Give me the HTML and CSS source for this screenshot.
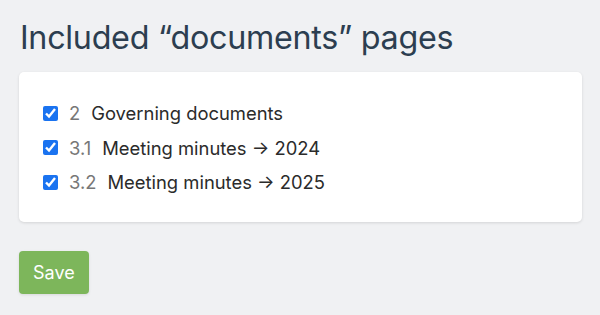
FILE: index.html
```html
<!DOCTYPE html>
<html lang="en">
<head>
    <meta charset="UTF-8">
    <meta name="viewport" content="width=device-width, initial-scale=1.0">
    <title>Included documents pages</title>
    <link rel="stylesheet" href="styles.css">
</head>
<body>
    <h1>Included “documents” pages</h1>
    <div class="card">
        <ul class="page-list">
            <li>
                <label>
                    <input type="checkbox" checked>
                    <span class="num">2</span>
                    <span class="title">Governing documents</span>
                </label>
            </li>
            <li>
                <label>
                    <input type="checkbox" checked>
                    <span class="num">3.1</span>
                    <span class="title">Meeting minutes → 2024</span>
                </label>
            </li>
            <li>
                <label>
                    <input type="checkbox" checked>
                    <span class="num">3.2</span>
                    <span class="title">Meeting minutes → 2025</span>
                </label>
            </li>
        </ul>
    </div>
    <button class="save-button">Save</button>
</body>
</html>
```

FILE: styles.css
```css
* {
    margin: 0;
    padding: 0;
    box-sizing: border-box;
}

body {
    font-family: Inter, 'Noto Sans', sans-serif;
    background-color: #f0f1f3;
    color: #2b2b2b;
    padding: 18px 18px 20px 19px;
}

h1 {
    color: #2c3e50;
    font-size: 32.3px;
    font-weight: 400;
    line-height: 40px;
    letter-spacing: -0.3px;
    margin-left: 1px;
    margin-bottom: 14px;
}

.card {
    background-color: white;
    border-radius: 5px;
    padding: 24px 24px 22px;
    box-shadow: 0 1px 3px rgba(0, 0, 0, 0.12);
}

.page-list {
    list-style: none;
}

.page-list li {
    height: 34.5px;
    display: flex;
    align-items: center;
}

.page-list label {
    display: flex;
    align-items: center;
    font-size: 18.4px;
}

.page-list input {
    width: 15px;
    height: 15px;
    margin-right: 11px;
    accent-color: #1a73f0;
}

.num {
    color: #777;
    margin-right: 11px;
}

.save-button {
    margin-top: 29px;
    background-color: #7db65b;
    color: white;
    border: none;
    border-radius: 4px;
    font-family: inherit;
    font-size: 18px;
    padding: 0 14px;
    height: 43px;
    box-shadow: 0 1px 3px rgba(0, 0, 0, 0.1);
}
```
